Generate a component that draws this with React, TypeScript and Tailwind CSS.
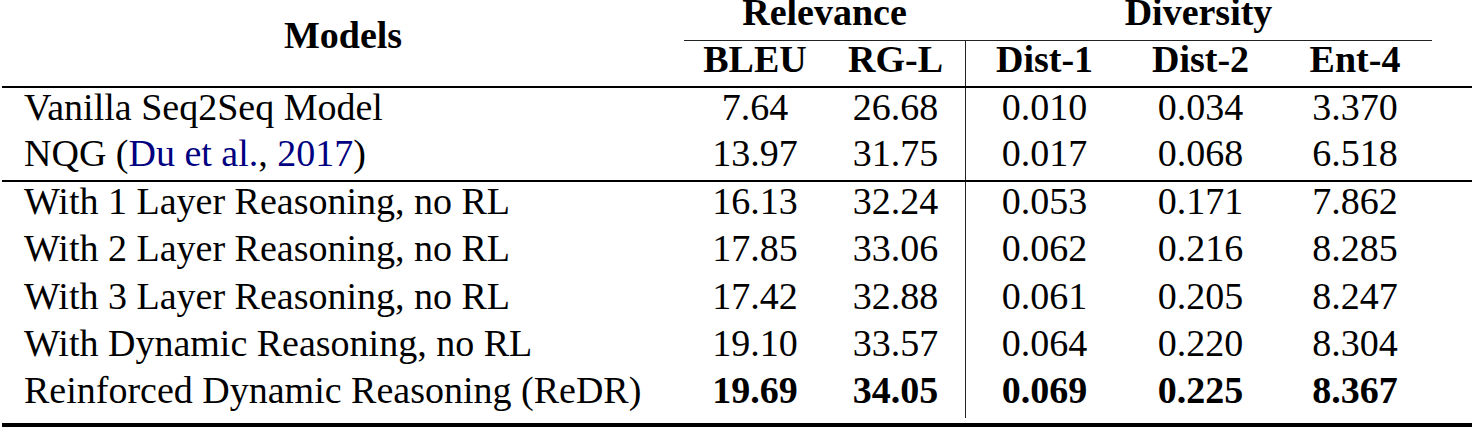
import React from "react";

type Row = {
  name: React.ReactNode;
  values: string[];
  bold?: boolean;
};

const cols = "grid grid-cols-[682px_142px_139px_158px_155px_154px_40px]";

const topRows: Row[] = [
  { name: "Vanilla Seq2Seq Model", values: ["7.64", "26.68", "0.010", "0.034", "3.370"] },
  {
    name: (
      <>
        NQG (<span className="text-[#000080]">Du et al.</span>,{" "}
        <span className="text-[#000080]">2017</span>)
      </>
    ),
    values: ["13.97", "31.75", "0.017", "0.068", "6.518"],
  },
];

const ourRows: Row[] = [
  { name: "With 1 Layer Reasoning, no RL", values: ["16.13", "32.24", "0.053", "0.171", "7.862"] },
  { name: "With 2 Layer Reasoning, no RL", values: ["17.85", "33.06", "0.062", "0.216", "8.285"] },
  { name: "With 3 Layer Reasoning, no RL", values: ["17.42", "32.88", "0.061", "0.205", "8.247"] },
  { name: "With Dynamic Reasoning, no RL", values: ["19.10", "33.57", "0.064", "0.220", "8.304"] },
  {
    name: "Reinforced Dynamic Reasoning (ReDR)",
    values: ["19.69", "34.05", "0.069", "0.225", "8.367"],
    bold: true,
  },
];

const TableRow = ({ row, height }: { row: Row; height: string }) => (
  <div className={`${cols} ${height} leading-[39px]`}>
    <div className="pl-[22px] whitespace-nowrap">{row.name}</div>
    {row.values.map((v, i) => (
      <div
        key={i}
        className={`text-center ${row.bold ? "font-bold" : ""} ${
          i === 2 ? "border-l-[1.5px] border-[#222]" : ""
        }`}
      >
        {v}
      </div>
    ))}
    <div />
  </div>
);

export default function App() {
  return (
    <div className="w-full h-[428px] overflow-hidden bg-white text-black text-[38px] font-['Liberation_Serif','Times_New_Roman',serif]">
      <div className="ml-[2px] w-[1470px]">
        {/* header */}
        <div className={`${cols} grid-rows-[40px_46px] border-b-2 border-black font-bold`}>
          <div className="row-span-2 pt-[12px] text-center leading-[47px]">Models</div>
          <div className="col-span-2 text-center leading-[24px]">Relevance</div>
          <div className="col-span-3 text-center leading-[24px]">Diversity</div>
          <div />
          <div className="border-t-[1.5px] border-[#222] text-center leading-[36px]">BLEU</div>
          <div className="border-t-[1.5px] border-[#222] text-center leading-[36px]">RG-L</div>
          <div className="border-t-[1.5px] border-l-[1.5px] border-[#222] text-center leading-[36px]">
            Dist-1
          </div>
          <div className="border-t-[1.5px] border-[#222] text-center leading-[36px]">Dist-2</div>
          <div className="border-t-[1.5px] border-[#222] text-center leading-[36px]">Ent-4</div>
          <div />
        </div>

        {/* baselines */}
        <div className="border-b-2 border-black">
          {topRows.map((r, i) => (
            <TableRow key={i} row={r} height="h-[46px]" />
          ))}
        </div>

        {/* our models */}
        <div className="pb-[5px] border-b-4 border-black">
          {ourRows.map((r, i) => (
            <TableRow key={i} row={r} height="h-[47.25px]" />
          ))}
        </div>
      </div>
    </div>
  );
}
